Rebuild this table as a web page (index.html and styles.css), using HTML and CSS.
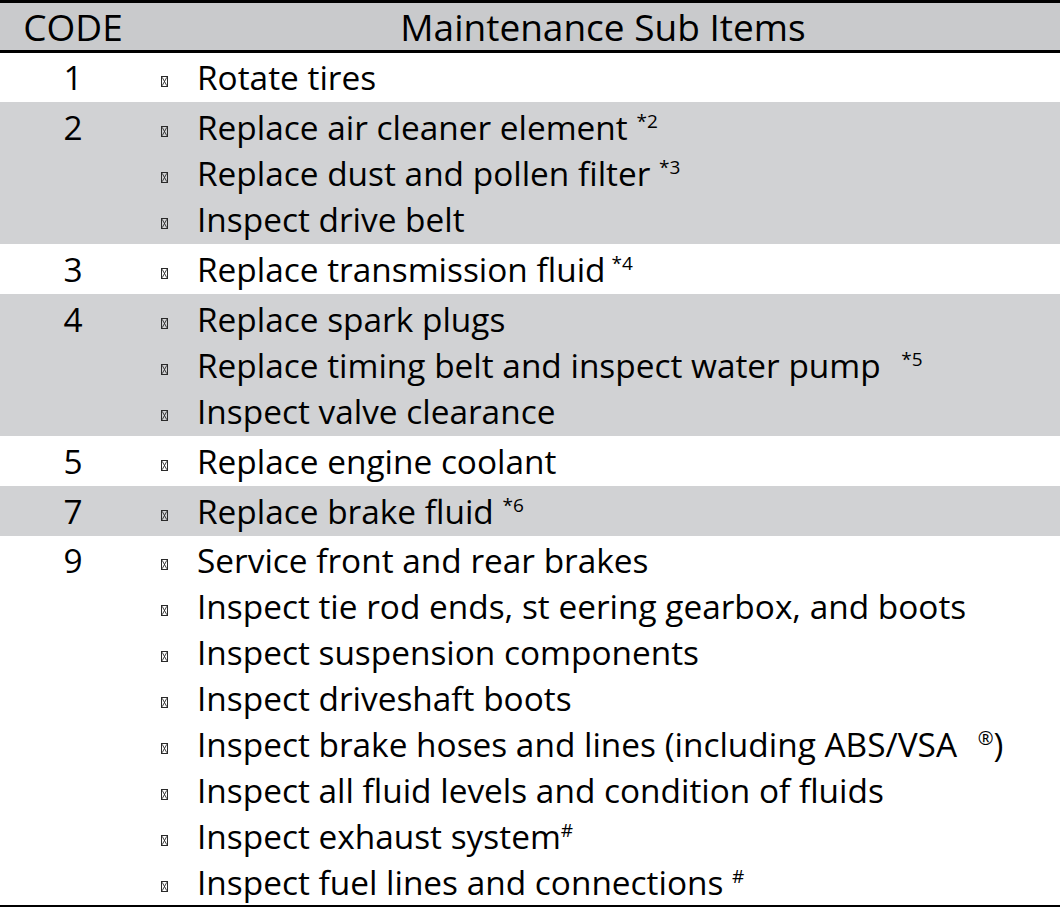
FILE: index.html
```html
<!DOCTYPE html>
<html>
<head>
<meta charset="utf-8">
<title>Maintenance Sub Items</title>
<link rel="stylesheet" href="styles.css">
</head>
<body>
<svg class="defs" width="0" height="0" aria-hidden="true">
  <symbol id="tofu" viewBox="0 0 7 11">
    <rect x="0.5" y="0.5" width="6" height="10" fill="none" stroke="#2a2a2a" stroke-width="1"/>
    <path d="M1.2 1.3L5.8 9.7M5.8 1.3L1.2 9.7" stroke="#2a2a2a" stroke-width="0.9" fill="none"/>
  </symbol>
</svg>
<div class="table">
  <div class="head">
    <div class="hcode">CODE</div>
    <div class="hitems">Maintenance Sub Items</div>
  </div>

  <div class="row first">
    <div class="code">1</div>
    <div class="items">
      <div class="item"><svg class="bul"><use href="#tofu"/></svg><span>Rotate tires</span></div>
    </div>
  </div>

  <div class="row shade">
    <div class="code">2</div>
    <div class="items">
      <div class="item"><svg class="bul"><use href="#tofu"/></svg><span>Replace air cleaner element <span class="sup">*2</span></span></div>
      <div class="item"><svg class="bul"><use href="#tofu"/></svg><span>Replace dust and pollen filter <span class="sup">*3</span></span></div>
      <div class="item"><svg class="bul"><use href="#tofu"/></svg><span>Inspect drive belt</span></div>
    </div>
  </div>

  <div class="row">
    <div class="code">3</div>
    <div class="items">
      <div class="item"><svg class="bul"><use href="#tofu"/></svg><span>Replace transmission fluid<span class="sup gap">*4</span></span></div>
    </div>
  </div>

  <div class="row shade">
    <div class="code">4</div>
    <div class="items">
      <div class="item"><svg class="bul"><use href="#tofu"/></svg><span>Replace spark plugs</span></div>
      <div class="item"><svg class="bul"><use href="#tofu"/></svg><span>Replace timing belt and inspect water pump <span class="sup wide">*5</span></span></div>
      <div class="item"><svg class="bul"><use href="#tofu"/></svg><span>Inspect valve clearance</span></div>
    </div>
  </div>

  <div class="row">
    <div class="code">5</div>
    <div class="items">
      <div class="item"><svg class="bul"><use href="#tofu"/></svg><span>Replace engine coolant</span></div>
    </div>
  </div>

  <div class="row shade">
    <div class="code">7</div>
    <div class="items">
      <div class="item"><svg class="bul"><use href="#tofu"/></svg><span>Replace brake fluid <span class="sup">*6</span></span></div>
    </div>
  </div>

  <div class="row last">
    <div class="code">9</div>
    <div class="items">
      <div class="item"><svg class="bul"><use href="#tofu"/></svg><span>Service front and rear brakes</span></div>
      <div class="item"><svg class="bul"><use href="#tofu"/></svg><span>Inspect tie rod ends, st eering gearbox, and boots</span></div>
      <div class="item"><svg class="bul"><use href="#tofu"/></svg><span>Inspect suspension components</span></div>
      <div class="item"><svg class="bul"><use href="#tofu"/></svg><span>Inspect driveshaft boots</span></div>
      <div class="item"><svg class="bul"><use href="#tofu"/></svg><span>Inspect brake hoses and lines (including ABS/VSA <span class="sup wide">®</span>)</span></div>
      <div class="item"><svg class="bul"><use href="#tofu"/></svg><span>Inspect all fluid levels and condition of fluids</span></div>
      <div class="item"><svg class="bul"><use href="#tofu"/></svg><span>Inspect exhaust system<span class="sup">#</span></span></div>
      <div class="item"><svg class="bul"><use href="#tofu"/></svg><span>Inspect fuel lines and connections <span class="sup">#</span></span></div>
    </div>
  </div>
</div>
</body>
</html>
```

FILE: styles.css
```css
html, body {
  margin: 0;
  padding: 0;
  background: #ffffff;
}

body {
  font-family: "Open Sans", "Noto Sans", sans-serif;
  color: #000000;
  width: 1060px;
}

.defs {
  position: absolute;
  width: 0;
  height: 0;
  overflow: hidden;
}

.table {
  width: 1060px;
  border-bottom: 3px solid #000000;
}

.head {
  display: grid;
  grid-template-columns: 146px 1fr;
  background: #c9cacc;
  border-top: 3px solid #000000;
  border-bottom: 3px solid #000000;
  height: 47px;
  font-size: 37px;
  line-height: 47px;
}

.hcode,
.hitems {
  text-align: center;
}

.row {
  display: grid;
  grid-template-columns: 146px 1fr;
  font-size: 33.4px;
  line-height: 46px;
  padding: 2px 0 2px;
}

.row.first {
  padding: 1px 0 2px;
}

.row.last {
  padding: 1px 0 0;
}

.shade {
  background: #d1d2d4;
}

.code {
  text-align: center;
}

.item {
  padding-left: 15px;
  white-space: nowrap;
}

.bul {
  width: 7px;
  height: 11px;
  vertical-align: 3px;
  margin-right: 29px;
}

.sup {
  font-size: 19px;
  line-height: 0;
  vertical-align: 12px;
}

.sup.gap {
  margin-left: 6px;
}

.sup.wide {
  margin-left: 12px;
}
```
